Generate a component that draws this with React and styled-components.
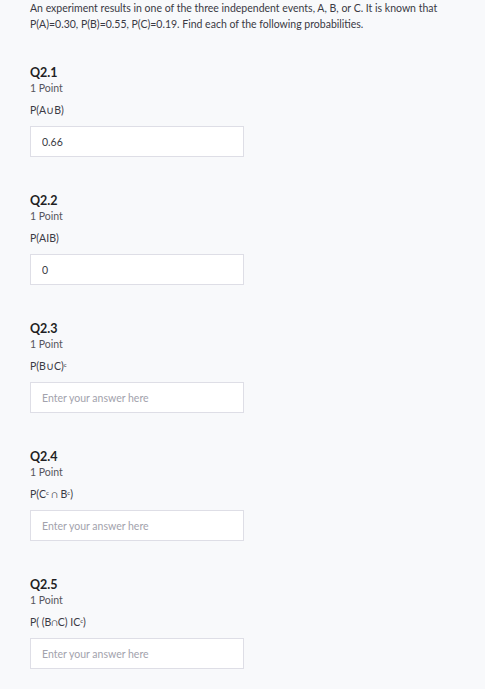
import React from "react";
import styled, { createGlobalStyle } from "styled-components";

const Global = createGlobalStyle`
  html, body { margin: 0; padding: 0; background: #f8f9fb; }
  body { font-family: Lato, "Open Sans", "Liberation Sans", sans-serif; color: #333; }
`;

const Page = styled.div`
  padding: 0 30px 20px 30px;
  width: 485px;
  box-sizing: border-box;
  min-height: 689px;
`;

const Intro = styled.p`
  margin: 0;
  font-size: 10.5px;
  line-height: 16px;
  color: #3a3a44;
  max-width: 420px;
`;

const Questions = styled.div`
  margin-top: 33px;
  display: flex;
  flex-direction: column;
  gap: 36px;
`;

const Question = styled.section`
  display: flex;
  flex-direction: column;
`;

const Title = styled.h3`
  margin: 0;
  font-size: 12.5px;
  line-height: 15px;
  font-weight: 700;
  color: #1f1f24;
`;

const Points = styled.div`
  font-size: 10.5px;
  line-height: 14px;
  color: #55555c;
  margin-top: 1px;
`;

const Prompt = styled.div`
  font-size: 10.5px;
  line-height: 14px;
  color: #3a3a44;
  margin-top: 8px;
  sup { font-size: 6px; vertical-align: 3px; line-height: 0; }
`;

const Answer = styled.input`
  margin-top: 9px;
  width: 214px;
  height: 31px;
  box-sizing: border-box;
  border: 1px solid #dedee6;
  background: #fff;
  padding: 0 11px;
  font-family: inherit;
  font-size: 10.5px;
  color: #3a3a44;
  outline: none;
  &::placeholder { color: #a2a2ac; }
`;

const items = [
  { id: "Q2.1", prompt: <>P(A∪B)</>, value: "0.66" },
  { id: "Q2.2", prompt: <>P(AIB)</>, value: "0" },
  { id: "Q2.3", prompt: <>P(B∪C)<sup>c</sup></>, value: "" },
  { id: "Q2.4", prompt: <>P(C<sup>c</sup> ∩ B<sup>c</sup>)</>, value: "" },
  { id: "Q2.5", prompt: <>P( (B∩C) IC<sup>c</sup>)</>, value: "" },
];

export default function App() {
  return (
    <>
      <Global />
      <Page>
        <Intro>
          An experiment results in one of the three independent events, A, B, or C. It is known that
          P(A)=0.30, P(B)=0.55, P(C)=0.19. Find each of the following probabilities.
        </Intro>
        <Questions>
          {items.map((q) => (
            <Question key={q.id}>
              <Title>{q.id}</Title>
              <Points>1 Point</Points>
              <Prompt>{q.prompt}</Prompt>
              <Answer defaultValue={q.value} placeholder="Enter your answer here" />
            </Question>
          ))}
        </Questions>
      </Page>
    </>
  );
}
